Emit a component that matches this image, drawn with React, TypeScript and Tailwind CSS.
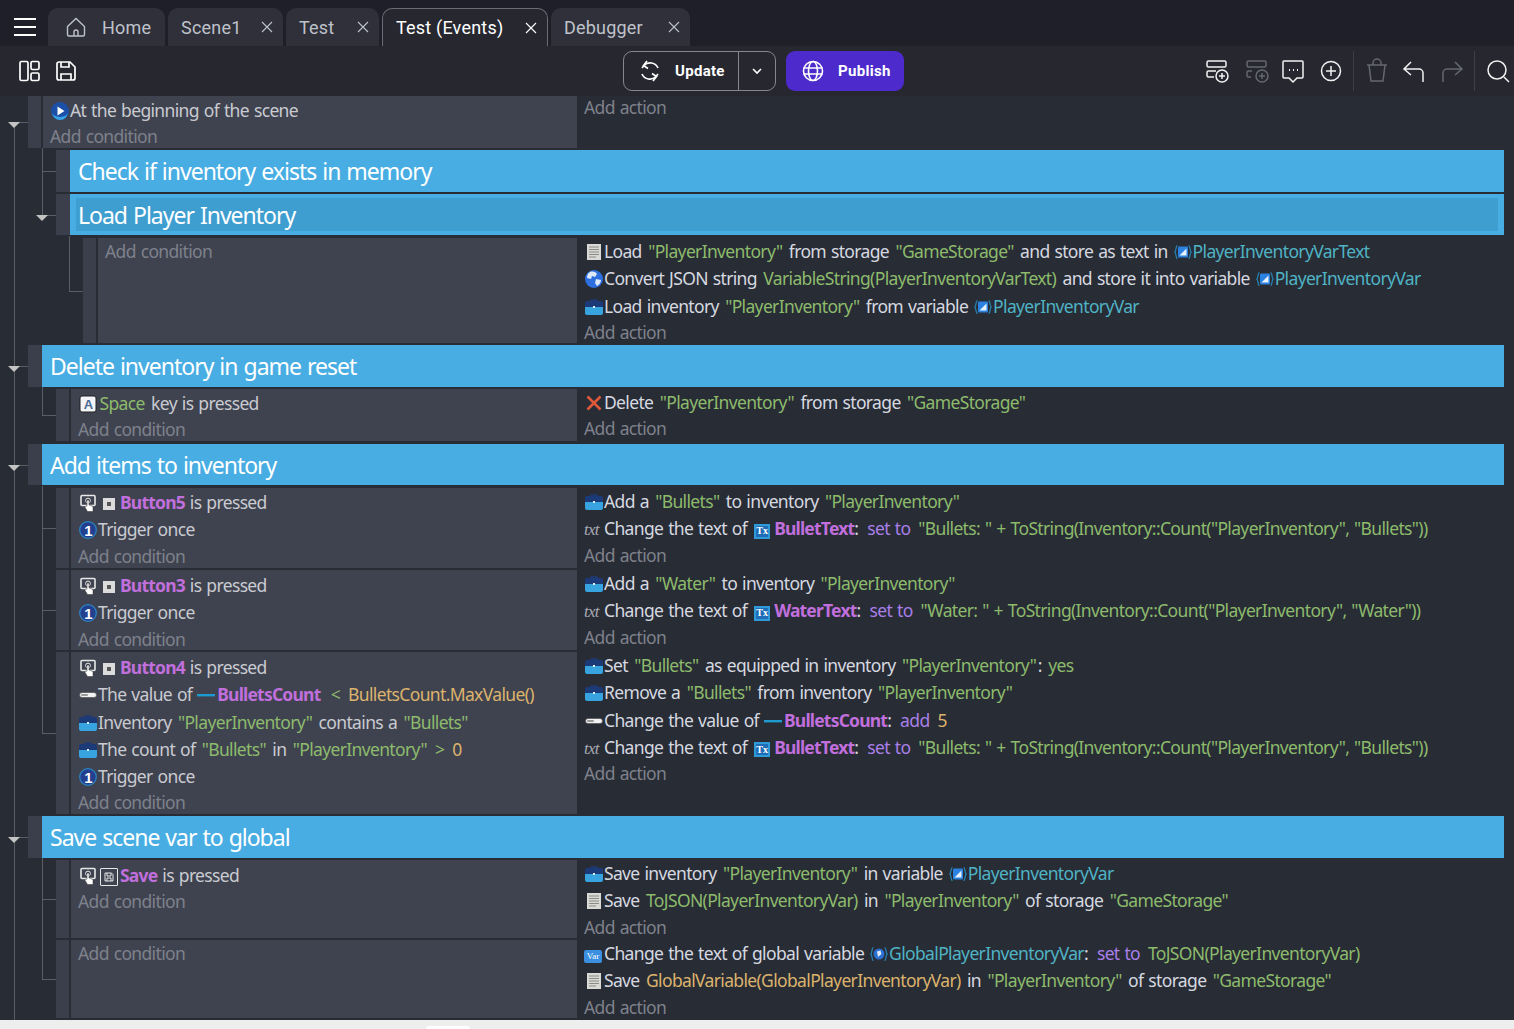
import type { ReactNode } from "react";

const G = ({ children }: { children: ReactNode }) => <span className="mx-[1.5px] text-[#8dbb6c]">{children}</span>;
const P = ({ children }: { children: ReactNode }) => <span className="font-bold tracking-[-0.8px] text-[#c06fdc]">{children}</span>;
const O = ({ children }: { children: ReactNode }) => <span className="mx-[1.5px] text-[#dcb36c]">{children}</span>;
const T = ({ children }: { children: ReactNode }) => <span className="text-[#4fb3c4]">{children}</span>;
const V = ({ children }: { children: ReactNode }) => <span className="ml-[4px] mr-[1.5px] text-[#a97fe8]">{children}</span>;

const icon = "ml-[1px] mr-[1px] inline-block h-[18px] w-[18px] shrink-0 align-[-3px]";

const SceneStart = () => (
  <svg viewBox="0 0 18 18" className={icon}>
    <circle cx="9" cy="9" r="9" fill="#1b4fa8" />
    <path d="M1 10a8 8 0 0 0 16 0 8 5 0 0 1-16 0z" fill="#39a3e8" />
    <path d="M6.500 4.500l7 4.500-7 4.500z" fill="#fff" />
  </svg>
);
const Doc = () => (
  <svg viewBox="0 0 18 18" className={icon}>
    <rect x="2" y="1" width="14" height="16" fill="#d9d9d6" />
    <path d="M4 4h10M4 6.500h10M4 9h10M4 11.500h10M4 14h7" stroke="#8a8a86" strokeWidth="1" />
  </svg>
);
const Globe = () => (
  <svg viewBox="0 0 18 18" className={icon}>
    <circle cx="9" cy="9" r="9" fill="#2e6fe0" />
    <path d="M5 2c3-1 6 0 7 2l-2 3-3-1-1 3-4-1c0-3 1-5 3-6zM11 9l5 1c0 3-2 5-4 6l-2-3z" fill="#dbe9fb" />
  </svg>
);
const Bag = () => (
  <svg viewBox="0 0 18 18" className={icon}>
    <path d="M6 3.500V2h6v1.500" fill="none" stroke="#1d3a78" strokeWidth="1.400" />
    <path d="M0 5a2 2 0 0 1 2-2h14a2 2 0 0 1 2 2v4H0z" fill="#1d3a78" />
    <path d="M0 9h18v6a2 2 0 0 1-2 2H2a2 2 0 0 1-2-2z" fill="#37a4e0" />
    <rect x="8" y="8" width="2" height="2" fill="#dfeefb" />
  </svg>
);
const Var = () => (
  <svg viewBox="0 0 18 18" className={icon}>
    <path d="M3.500 2.500C1.500 2.500 2.500 8 .8 9c1.700 1 .7 6.500 2.700 6.500M14.500 2.500c2 0 1 5.500 2.700 6.500-1.700 1-.7 6.500-2.700 6.500" fill="none" stroke="#2587b8" strokeWidth="1.200" />
    <rect x="4" y="3.500" width="10" height="11" rx="1" fill="#2b82e0" />
    <path d="M5.500 12.500l7-7v7z" fill="#e6f2ff" />
  </svg>
);
const GlobalVar = () => (
  <svg viewBox="0 0 18 18" className={icon}>
    <path d="M3.500 2.500C1.500 2.500 2.500 8 .8 9c1.700 1 .7 6.500 2.700 6.500M14.500 2.500c2 0 1 5.500 2.700 6.500-1.700 1-.7 6.500-2.700 6.500" fill="none" stroke="#2587b8" strokeWidth="1.200" />
    <circle cx="9" cy="9" r="5.500" fill="#2b6fd0" />
    <path d="M7 6.500l3.500-1 1 3.500-3.500 3z" fill="#dbe9fb" />
  </svg>
);
const Cross = () => (
  <svg viewBox="0 0 18 18" className={icon}>
    <path d="M2.500 2.500l13 13M15.500 2.500l-13 13" stroke="#e0583a" strokeWidth="2.600" />
  </svg>
);
const KeyA = () => (
  <svg viewBox="0 0 18 18" className={icon}>
    <rect x="1" y="1" width="16" height="16" rx="2" fill="#f2f4f8" stroke="#222" />
    <text x="9" y="14" textAnchor="middle" fontSize="13" fontWeight="700" fill="#4a6a94" fontFamily="Liberation Sans">A</text>
  </svg>
);
const Touch = () => (
  <svg viewBox="0 0 18 18" className="ml-[1px] inline-block h-[18px] w-[18px] align-[-3px]">
    <rect x="2" y="1.500" width="14" height="10" rx="1" fill="none" stroke="#e8e8e8" strokeWidth="1.600" />
    <circle cx="9" cy="6.500" r="2.400" fill="none" stroke="#e8e8e8" />
    <path d="M8 6h2v5l4 1.500V17.500H8.500L5.500 12.500 8 12z" fill="#fff" stroke="#333" strokeWidth=".5" />
  </svg>
);
const Thumb = () => (
  <span className="ml-[6px] mr-[5px] inline-flex h-3 w-3 items-center justify-center bg-[#dcdcdc] align-[3px]">
    <span className="h-1 w-1 bg-[#555]" />
  </span>
);
const SaveThumb = () => (
  <span className="ml-[3px] mr-[2px] inline-flex h-[18px] w-[18px] items-center justify-center rounded-[1px] border border-[#e8e8e8] align-[-1px]">
    <svg viewBox="0 0 12 12" className="h-3 w-3">
      <path d="M2 2h6.500L10 3.500V10H2zM4 2v3h4V2M4 10V7h4v3" fill="none" stroke="#e8e8e8" strokeWidth="1" />
    </svg>
  </span>
);
const Once = () => (
  <svg viewBox="0 0 18 18" className={icon}>
    <circle cx="9" cy="9" r="8.300" fill="#23408f" stroke="#2a86c8" strokeWidth="1.200" />
    <text x="9" y="14.500" textAnchor="middle" fontSize="15" fontWeight="700" fill="#fff" fontFamily="Liberation Sans">1</text>
  </svg>
);
const Pill = () => (
  <svg viewBox="0 0 18 18" className={icon}>
    <rect x=".5" y="6.500" width="17" height="5" rx="2.500" fill="#f2f2f2" stroke="#444" strokeWidth=".6" />
    <rect x="2" y="8" width="7" height="2" rx="1" fill="#9a9a9a" />
  </svg>
);
const Dash = () => (
  <svg viewBox="0 0 18 18" className="ml-[5px] mr-[2px] inline-block h-[18px] w-[18px] align-[-3px]">
    <rect x="0" y="8" width="18" height="2.400" fill="#1d9ad0" />
  </svg>
);
const Txt = () => (
  <span className="mr-[4px] inline-block w-[16px] font-['Liberation_Serif',serif] text-[17px] italic tracking-[-0.8px] text-[#a9abb3]">txt</span>
);
const Tx = () => (
  <span className="ml-[7px] mr-[4px] inline-flex h-[15px] w-[16px] items-center justify-center border-[2px] border-[#2e9ad8] bg-[#1f6cb8] align-[1px] font-['Liberation_Serif',serif] text-[10px] font-bold leading-none tracking-normal text-white">Tx</span>
);
const VarBadge = () => (
  <span className="mr-[2px] inline-flex h-[13px] w-[18px] items-center justify-center rounded-[2px] bg-[#3a8fe0] align-[1px] font-['Liberation_Serif',serif] text-[9px] leading-none tracking-normal text-white">Var</span>
);

const Line = ({ children }: { children: ReactNode }) => <div className="h-[27.300px] whitespace-pre leading-[27px]">{children}</div>;
const AddCond = () => <div className="h-[25px] leading-[25px] text-[#7e818b]">Add condition</div>;
const AddAct = () => <div className="h-[25px] leading-[25px] text-[#7e818b]">Add action</div>;

const depthPad: Record<number, string> = { 0: "pl-[28px]", 1: "pl-[56px]", 2: "pl-[83px]" };
const connLeft: Record<number, string> = { 1: "left-[42px] w-[14px]", 2: "left-[69px] w-[14px]" };

// tree connector drawn in the gutter next to an event
function Connector({ depth, last, arrow }: { depth: number; last?: boolean; arrow?: boolean }) {
  if (depth === 0) {
    return (
      <>
        <div className="absolute left-[14px] top-1/2 h-px w-[14px] bg-[#5a5d66]" />
        <div className="absolute left-[8px] top-1/2 h-0 w-0 border-x-[6px] border-t-[6px] border-x-transparent border-t-[#c4c4c4]" />
      </>
    );
  }
  return (
    <>
      <div className={`absolute top-1/2 h-px bg-[#5a5d66] ${connLeft[depth]}`} />
      <div className={`absolute -top-[2px] w-px bg-[#5a5d66] ${depth === 1 ? "left-[42px]" : "left-[69px]"} ${last ? "h-[calc(50%+2px)]" : "h-[calc(100%+2px)]"}`} />
      {arrow && <div className="absolute left-[36px] top-1/2 h-0 w-0 border-x-[6px] border-t-[6px] border-x-transparent border-t-[#c4c4c4]" />}
    </>
  );
}

function EventRow({ depth, h, mt, last, tight, conds, acts }: { depth: number; h: string; mt: string; last?: boolean; tight?: boolean; conds: ReactNode; acts: ReactNode }) {
  return (
    <div className={`relative flex ${h} ${mt}`}>
      <Connector depth={depth} last={last} />
      <div className={`flex w-[577px] shrink-0 gap-[2px] ${depthPad[depth]}`}>
        <div className="w-[13px] shrink-0 bg-[#3b3f4c]" />
        <div className={`flex-1 bg-[#3f4350] pl-[7px] text-[#c9cbd1] ${tight ? "pt-[1px]" : "pt-[2px]"}`}>{conds}</div>
      </div>
      <div className="flex-1 pl-[7px] text-[#d6d9e0]">{acts}</div>
    </div>
  );
}

function Banner({ depth, h, mt, title, inner, last, arrow }: { depth: number; h: string; mt: string; title: string; inner?: boolean; last?: boolean; arrow?: boolean }) {
  return (
    <div className={`relative flex pr-[10px] ${h} ${mt} ${depthPad[depth]}`}>
      <Connector depth={depth} last={last} arrow={arrow} />
      <div className="w-[14px] shrink-0 bg-[#3b3f4c]" />
      <div className="flex flex-1 bg-[#48ade2] p-[4px_6px]">
        <div className={`flex-1 pl-[2px] text-[23px] leading-[34px] tracking-[-1px] text-white ${inner ? "bg-[#3f9ed0]" : ""}`}>{title}</div>
      </div>
    </div>
  );
}

function Tab({ label, active, w, home }: { label: string; active?: boolean; w: string; home?: boolean }) {
  return (
    <div className={`flex h-[38px] items-center justify-between rounded-t-[10px] pl-[13px] pr-[10px] ${w} ${active ? "border border-b-0 border-[#6a6c75] bg-[#26272f] text-white" : "bg-[#2f3039] text-[#bfc2cb]"}`}>
      {home && (
        <svg viewBox="0 0 24 24" className="ml-[3px] mr-[14px] h-[24px] w-[24px]" fill="none" stroke="#bfc2cb" strokeWidth="1.400">
          <path d="M3.500 11.500L12 3.500l8.500 8v8a1.500 1.500 0 0 1-1.500 1.500H5a1.500 1.500 0 0 1-1.500-1.500z" />
          <path d="M10 21v-4a2 2 0 0 1 4 0v4" />
        </svg>
      )}
      <span className="flex-1 text-[18px] tracking-[0.2px]">{label}</span>
      {!home && (
        <svg viewBox="0 0 12 12" className="h-[12px] w-[12px]" stroke={active ? "#fff" : "#bfc2cb"} strokeWidth="1.100">
          <path d="M1 1l10 10M11 1L1 11" />
        </svg>
      )}
    </div>
  );
}

const tool = "h-[26px] w-[26px] shrink-0 fill-none stroke-[#f2f2f2] stroke-[1.500]";
const toolDim = "h-[26px] w-[26px] shrink-0 fill-none stroke-[#66686f] stroke-[1.500]";

export default function App() {
  return (
    <div className="flex h-[1029px] w-[1514px] flex-col overflow-hidden bg-[#282c35] font-['Noto_Sans',sans-serif] text-[17.500px] tracking-[-0.65px] [word-spacing:1px]">
      {/* tabs */}
      <div className="relative flex h-[46px] shrink-0 items-end gap-[3px] bg-[#1e1f28] pl-[48px] font-['Roboto',sans-serif] tracking-normal [word-spacing:0]">
        <svg viewBox="0 0 24 24" className="absolute left-[13px] top-[15px] h-[24px] w-[24px]" stroke="#fff" strokeWidth="2">
          <path d="M1 4h22M1 12h22M1 20h22" />
        </svg>
        <Tab label="Home" w="w-[117px]" home />
        <Tab label="Scene1" w="w-[115px]" />
        <Tab label="Test" w="w-[93px]" />
        <Tab label="Test (Events)" active w="w-[166px]" />
        <Tab label="Debugger" w="w-[139px]" />
      </div>

      {/* toolbar */}
      <div className="flex h-[50px] shrink-0 items-center bg-[#26272f] tracking-normal [word-spacing:0]">
        <svg viewBox="0 0 24 24" className="ml-[17px] h-[24px] w-[24px] shrink-0 fill-none stroke-white stroke-[1.700]">
          <rect x="3" y="2.500" width="8" height="19" rx="1.500" />
          <rect x="14" y="2.500" width="8" height="8" rx="1.500" />
          <rect x="14" y="14" width="8" height="7.500" rx="1.500" />
        </svg>
        <svg viewBox="0 0 24 24" className="ml-[13px] h-[24px] w-[24px] shrink-0 fill-none stroke-white stroke-[1.700]">
          <path d="M3 5a2 2 0 0 1 2-2h11l5 5v11a2 2 0 0 1-2 2H5a2 2 0 0 1-2-2z" />
          <path d="M7 3v5h8V3M7 21v-6h10v6" />
        </svg>

        <div className="ml-[545px] flex h-[40px] w-[153px] shrink-0 items-center rounded-[9px] border border-[#85878e]">
          <div className="flex h-full w-[114px] shrink-0 items-center gap-[13px] pl-[14px]">
            <svg viewBox="0 0 24 24" className="h-[24px] w-[24px] shrink-0 fill-none stroke-white stroke-[1.700]">
              <path d="M20 9a8.500 8.500 0 0 0-14-2.500L4 9M4 15a8.500 8.500 0 0 0 14 2.500L20 15" />
              <path d="M9 2L5.500 6.500 10 9.500M15 22l3.500-4.500L14 14.500" />
            </svg>
            <span className="font-['Roboto',sans-serif] text-[15px] font-bold tracking-[0.3px] text-white">Update</span>
          </div>
          <div className="flex h-full flex-1 items-center justify-center border-l border-[#85878e]">
            <svg viewBox="0 0 12 12" className="h-[12px] w-[12px] fill-none stroke-white stroke-[1.600]">
              <path d="M2 4l4 4 4-4" />
            </svg>
          </div>
        </div>
        <div className="ml-[10px] flex h-[40px] w-[118px] shrink-0 items-center gap-[13px] rounded-[9px] bg-[#4c2acb] pl-[15px]">
          <svg viewBox="0 0 24 24" className="h-[24px] w-[24px] shrink-0 fill-none stroke-white stroke-[1.600]">
            <circle cx="12" cy="12" r="9.500" />
            <ellipse cx="12" cy="12" rx="4.500" ry="9.500" />
            <path d="M2.500 9h19M2.500 15h19" />
          </svg>
          <span className="font-['Roboto',sans-serif] text-[15px] font-bold tracking-[0.3px] text-white">Publish</span>
        </div>

        <div className="ml-[300px] flex h-[40px] items-center">
          <svg viewBox="0 0 26 26" className={tool}>
            <rect x="3" y="3" width="19" height="6" rx="1.500" />
            <path d="M12 13H4.500A1.500 1.500 0 0 0 3 14.500v3A1.500 1.500 0 0 0 4.500 19H10" />
            <circle cx="18" cy="18" r="6" />
            <path d="M18 15v6M15 18h6" />
          </svg>
          <svg viewBox="0 0 26 26" className={`${toolDim} ml-[14px]`}>
            <rect x="3" y="3" width="19" height="6" rx="1.500" />
            <path d="M8 13H4.500A1.500 1.500 0 0 0 3 14.500v3A1.500 1.500 0 0 0 4.500 19H7" />
            <circle cx="18" cy="18" r="6" />
            <path d="M18 15v6M15 18h6" />
          </svg>
          <svg viewBox="0 0 26 26" className={`${tool} ml-[10px]`}>
            <path d="M4 3h18a1 1 0 0 1 1 1v15a1 1 0 0 1-1 1h-5l-4 4-4-4H4a1 1 0 0 1-1-1V4a1 1 0 0 1 1-1z" />
            <path d="M9 12h1M13 12h1M17 12h1" strokeWidth="2" />
          </svg>
          <svg viewBox="0 0 26 26" className={`${tool} ml-[12px]`}>
            <circle cx="13" cy="13" r="9.500" />
            <path d="M13 8v10M8 13h10" />
          </svg>
          <div className="ml-[9px] mr-[10px] h-[40px] w-px bg-[#3d3f47]" />
          <svg viewBox="0 0 26 26" className={toolDim}>
            <path d="M3 7h20M5 7l2 16h12l2-16M9 7V5a4 4 0 0 1 8 0v2" />
          </svg>
          <svg viewBox="0 0 26 26" className={`${tool} ml-[11px]`}>
            <path d="M10 4L3 11l7 6M3 11h15a4 4 0 0 1 4 4v9" />
          </svg>
          <svg viewBox="0 0 26 26" className={`${toolDim} ml-[12px]`}>
            <path d="M16 4l7 7-7 6M23 11H8a4 4 0 0 0-4 4v9" />
          </svg>
          <div className="ml-[9px] mr-[10px] h-[40px] w-px bg-[#3d3f47]" />
          <svg viewBox="0 0 26 26" className={tool}>
            <circle cx="12" cy="12" r="9" />
            <path d="M19 19l5 5" />
          </svg>
        </div>
      </div>

      {/* events sheet */}
      <div className="relative flex-1">
        <div className="absolute bottom-0 left-[14px] top-[29px] w-px bg-[#5a5d66]" />

        <EventRow depth={0} h="h-[52px]" mt="mt-0" tight
          conds={<><Line><SceneStart />At the beginning of the scene</Line><AddCond /></>}
          acts={<div className="-mt-[1px]"><AddAct /></div>} />

        <Banner depth={1} h="h-[42px]" mt="mt-[2px]" title="Check if inventory exists in memory" />
        <Banner depth={1} h="h-[41px]" mt="mt-[2px]" title="Load Player Inventory" inner last arrow />

        <EventRow depth={2} h="h-[105px]" mt="mt-[3px]" last tight
          conds={<AddCond />}
          acts={<>
            <Line><Doc />Load <G>"PlayerInventory"</G> from storage <G>"GameStorage"</G> and store as text in <Var /><T>PlayerInventoryVarText</T></Line>
            <Line><Globe />Convert JSON string <G>VariableString(PlayerInventoryVarText)</G> and store it into variable <Var /><T>PlayerInventoryVar</T></Line>
            <Line><Bag />Load inventory <G>"PlayerInventory"</G> from variable <Var /><T>PlayerInventoryVar</T></Line>
            <AddAct />
          </>} />

        <Banner depth={0} h="h-[42px]" mt="mt-[2px]" title="Delete inventory in game reset" />

        <EventRow depth={1} h="h-[52px]" mt="mt-[2px]" last tight
          conds={<><Line><KeyA /><G>Space</G> key is pressed</Line><AddCond /></>}
          acts={<><Line><Cross />Delete <G>"PlayerInventory"</G> from storage <G>"GameStorage"</G></Line><AddAct /></>} />

        <Banner depth={0} h="h-[41px]" mt="mt-[3px]" title="Add items to inventory" />

        <EventRow depth={1} h="h-[80px]" mt="mt-[3px]" tight
          conds={<><Line><Touch /><Thumb /><P>Button5</P> is pressed</Line><Line><Once />Trigger once</Line><AddCond /></>}
          acts={<>
            <Line><Bag />Add a <G>"Bullets"</G> to inventory <G>"PlayerInventory"</G></Line>
            <Line><Txt />Change the text of<Tx /><P>BulletText</P>: <V>set to</V> <G>"Bullets: " + ToString(Inventory::Count("PlayerInventory", "Bullets"))</G></Line>
            <AddAct />
          </>} />

        <EventRow depth={1} h="h-[80px]" mt="mt-[2px]"
          conds={<><Line><Touch /><Thumb /><P>Button3</P> is pressed</Line><Line><Once />Trigger once</Line><AddCond /></>}
          acts={<>
            <Line><Bag />Add a <G>"Water"</G> to inventory <G>"PlayerInventory"</G></Line>
            <Line><Txt />Change the text of<Tx /><P>WaterText</P>: <V>set to</V> <G>"Water: " + ToString(Inventory::Count("PlayerInventory", "Water"))</G></Line>
            <AddAct />
          </>} />

        <EventRow depth={1} h="h-[162px]" mt="mt-[2px]" last
          conds={<>
            <Line><Touch /><Thumb /><P>Button4</P> is pressed</Line>
            <Line><Pill />The value of<Dash /><P>BulletsCount</P> <span className="ml-[4px]"><G>{"<"}</G></span> <O>BulletsCount.MaxValue()</O></Line>
            <Line><Bag />Inventory <G>"PlayerInventory"</G> contains a <G>"Bullets"</G></Line>
            <Line><Bag />The count of <G>"Bullets"</G> in <G>"PlayerInventory"</G> <G>{">"}</G> <O>0</O></Line>
            <Line><Once />Trigger once</Line>
            <AddCond />
          </>}
          acts={<>
            <Line><Bag />Set <G>"Bullets"</G> as equipped in inventory <G>"PlayerInventory"</G>: <G>yes</G></Line>
            <Line><Bag />Remove a <G>"Bullets"</G> from inventory <G>"PlayerInventory"</G></Line>
            <Line><Pill />Change the value of<Dash /><P>BulletsCount</P>: <V>add</V> <O>5</O></Line>
            <Line><Txt />Change the text of<Tx /><P>BulletText</P>: <V>set to</V> <G>"Bullets: " + ToString(Inventory::Count("PlayerInventory", "Bullets"))</G></Line>
            <AddAct />
          </>} />

        <Banner depth={0} h="h-[42px]" mt="mt-[2px]" title="Save scene var to global" />

        <EventRow depth={1} h="h-[78px]" mt="mt-[2px]"
          conds={<><Line><Touch /><SaveThumb /><P>Save</P> is pressed</Line><AddCond /></>}
          acts={<>
            <Line><Bag />Save inventory <G>"PlayerInventory"</G> in variable <Var /><T>PlayerInventoryVar</T></Line>
            <Line><Doc />Save <G>ToJSON(PlayerInventoryVar)</G> in <G>"PlayerInventory"</G> of storage <G>"GameStorage"</G></Line>
            <AddAct />
          </>} />

        <EventRow depth={1} h="h-[78px]" mt="mt-[2px]" last tight
          conds={<AddCond />}
          acts={<>
            <Line><VarBadge />Change the text of global variable <GlobalVar /><T>GlobalPlayerInventoryVar</T>: <V>set to</V> <G>ToJSON(PlayerInventoryVar)</G></Line>
            <Line><Doc />Save <O>GlobalVariable(GlobalPlayerInventoryVar)</O> in <G>"PlayerInventory"</G> of storage <G>"GameStorage"</G></Line>
            <AddAct />
          </>} />
      </div>

      {/* strip under the sheet */}
      <div className="flex h-[9px] shrink-0 items-end bg-[#eeeeee] pl-[426px]">
        <div className="h-[3px] w-[44px] rounded-t-[3px] bg-white" />
      </div>
    </div>
  );
}
